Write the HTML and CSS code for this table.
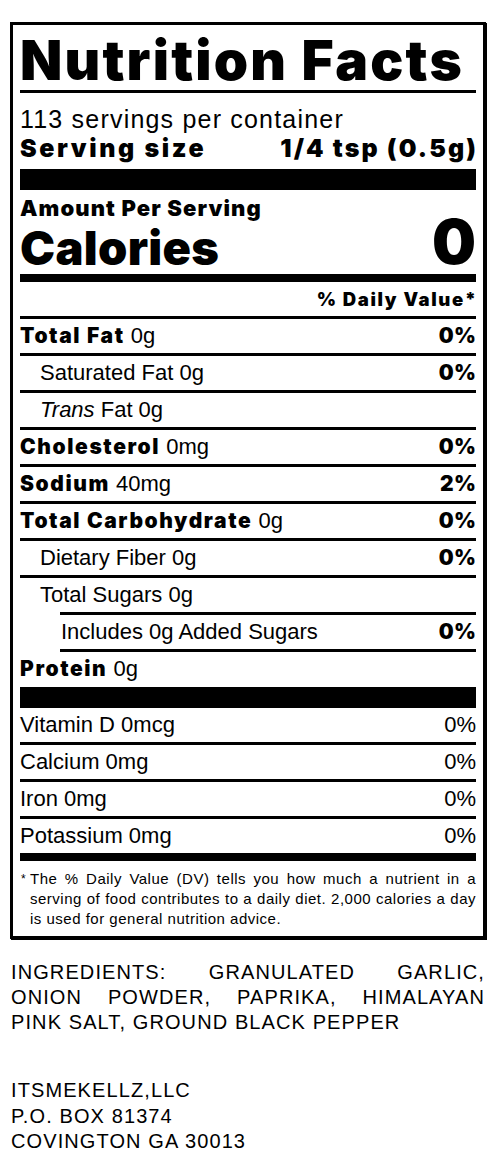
FILE: index.html
```html
<!DOCTYPE html>
<html lang="en">
<head>
<meta charset="utf-8">
<title>Nutrition Facts</title>
<link rel="stylesheet" href="styles.css">
</head>
<body>
<div class="page">
  <div class="label">
    <h1 class="title">Nutrition Facts</h1>
    <div class="servings">113 servings per container</div>
    <div class="serving-size"><span class="ss-label">Serving size</span><span class="ss-value">1/4 tsp (0.5g)</span></div>
    <div class="amount">Amount Per Serving</div>
    <div class="calories"><span class="cal-label">Calories</span><span class="cal-value">0</span></div>
    <div class="dv-head"><span>% Daily Value*</span></div>

    <div class="row"><span><b>Total Fat</b> 0g</span><strong>0%</strong></div>
    <div class="row indent1"><span>Saturated Fat 0g</span><strong>0%</strong></div>
    <div class="row indent1"><span><i>Trans</i> Fat 0g</span></div>
    <div class="row"><span><b>Cholesterol</b> 0mg</span><strong>0%</strong></div>
    <div class="row"><span><b>Sodium</b> 40mg</span><strong>2%</strong></div>
    <div class="row"><span><b>Total Carbohydrate</b> 0g</span><strong>0%</strong></div>
    <div class="row indent1"><span>Dietary Fiber 0g</span><strong>0%</strong></div>
    <div class="row indent1 no-rule"><span>Total Sugars 0g</span></div>
    <div class="row added"><span>Includes 0g Added Sugars</span><strong>0%</strong></div>
    <div class="row protein"><span><b>Protein</b> 0g</span></div>

    <div class="row vit"><span>Vitamin D 0mcg</span><span>0%</span></div>
    <div class="row vit"><span>Calcium 0mg</span><span>0%</span></div>
    <div class="row vit"><span>Iron 0mg</span><span>0%</span></div>
    <div class="row vit last"><span>Potassium 0mg</span><span>0%</span></div>

    <div class="footnote"><span class="star">*</span><p>The % Daily Value (DV) tells you how much a nutrient in a serving of food contributes to a daily diet. 2,000 calories a day is used for general nutrition advice.</p></div>
  </div>

  <p class="ingredients">INGREDIENTS: GRANULATED GARLIC, ONION POWDER, PAPRIKA, HIMALAYAN PINK SALT, GROUND BLACK PEPPER</p>

  <p class="address">ITSMEKELLZ,LLC<br>P.O. BOX 81374<br>COVINGTON GA 30013</p>
</div>
</body>
</html>
```

FILE: styles.css
```css
* { box-sizing: border-box; }

body {
  margin: 0;
  background: #fff;
  color: #000;
  font-family: "Liberation Sans", Arial, sans-serif;
}

.page {
  padding: 22px 0 0 10px;
}

.label {
  width: 476px;
  border: 3px solid #000;
  box-shadow: 1px 1px 0 #000;
  padding: 0 7px 7px;
}

.title,
.serving-size,
.amount,
.calories,
.dv-head,
.row b,
.row strong {
  font-family: Inter, "Liberation Sans", sans-serif;
  font-weight: 900;
}

.title {
  margin: 0;
  padding-top: 5px;
  font-size: 55px;
  line-height: 60px;
  letter-spacing: 2.2px;
  border-bottom: 3px solid #000;
}

.servings {
  margin-top: 12px;
  font-size: 25px;
  line-height: 28px;
  letter-spacing: 1.2px;
}

.serving-size {
  display: flex;
  justify-content: space-between;
  font-size: 25px;
  line-height: 30px;
  padding-bottom: 6px;
  border-bottom: 21px solid #000;
}

.ss-label {
  letter-spacing: 2.6px;
}

.ss-value {
  letter-spacing: 2.1px;
  margin-right: -2px;
}

.amount {
  margin-top: 3px;
  font-size: 22px;
  line-height: 30px;
  letter-spacing: 1.1px;
}

.calories {
  display: flex;
  justify-content: space-between;
  align-items: flex-end;
  height: 59px;
  border-bottom: 8px solid #000;
}

.cal-label {
  font-size: 47px;
  line-height: 50px;
  padding-bottom: 1px;
  letter-spacing: 0.3px;
}

.cal-value {
  font-size: 62px;
  line-height: 50px;
  padding-bottom: 7px;
}

.dv-head {
  text-align: right;
  font-size: 18.5px;
  line-height: 34px;
  height: 37px;
  border-bottom: 3px solid #000;
}

.dv-head span {
  letter-spacing: 1.6px;
  margin-right: -1.6px;
}

.row {
  display: flex;
  justify-content: space-between;
  height: 37px;
  font-size: 22px;
  line-height: 34px;
  border-bottom: 3px solid #000;
}

.row b {
  font-size: 21px;
  letter-spacing: 1.6px;
}

.row strong {
  font-size: 21px;
  letter-spacing: 0.5px;
  margin-right: -0.5px;
}

.row i {
  font-style: italic;
}

.indent1 {
  padding-left: 20px;
}

.no-rule {
  height: 34px;
  border-bottom: none;
}

.added {
  height: 40px;
  margin-left: 40px;
  padding-left: 1px;
  border-top: 3px solid #000;
}

.protein {
  height: 56px;
  border-bottom: 21px solid #000;
}

.vit.last {
  height: 42px;
  border-bottom: 8px solid #000;
}

.footnote {
  display: flex;
  padding-top: 8px;
  font-size: 15px;
  line-height: 20px;
}

.star {
  width: 10px;
  flex: none;
  font-size: 12px;
  padding-left: 1px;
}

.footnote p {
  margin: 0;
  flex: 1;
  text-align: justify;
  letter-spacing: 0.5px;
}

.ingredients {
  margin: 21px 8px 0 1px;
  font-size: 20px;
  line-height: 25px;
  text-align: justify;
  letter-spacing: 1.1px;
}

.address {
  margin: 43px 0 0 1px;
  font-size: 20px;
  line-height: 25.5px;
  letter-spacing: 1.1px;
}
```
